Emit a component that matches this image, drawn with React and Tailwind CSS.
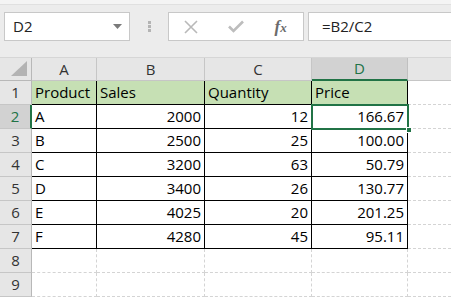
import React from 'react';

const font = { fontFamily: '"Open Sans", "Liberation Sans", sans-serif' };

const cols = ['A', 'B', 'C', 'D'];
const rows = [
  ['Product', 'Sales', 'Quantity', 'Price'],
  ['A', '2000', '12', '166.67'],
  ['B', '2500', '25', '100.00'],
  ['C', '3200', '63', '50.79'],
  ['D', '3400', '26', '130.77'],
  ['E', '4025', '20', '201.25'],
  ['F', '4280', '45', '95.11'],
];

function Toolbar() {
  return (
    <div className="h-[58px] bg-[#ececec] border-b border-[#d6d6d6]">
      <div className="h-[5px] bg-[#f4f4f4] border-b border-[#e0e0e0]" />
      <div className="flex items-center h-[45px] pt-[6px] pb-[8px]">
        <div className="ml-[4px] w-[126px] h-[29px] bg-white border border-[#c8c8c8] flex items-center justify-between pl-[8px] pr-[7px]">
          <span className="text-[15px] text-[#222]">D2</span>
          <svg width="9" height="5" viewBox="0 0 9 5">
            <path d="M0 0 L9 0 L4.5 5 Z" fill="#7a7a7a" />
          </svg>
        </div>
        <div className="w-[38px] flex flex-col items-center gap-[1px]">
          <div className="w-[3px] h-[3px] bg-[#b4b4b4]" />
          <div className="w-[3px] h-[3px] bg-[#b4b4b4]" />
          <div className="w-[3px] h-[3px] bg-[#b4b4b4]" />
        </div>
        <div className="w-[136px] h-[29px] bg-white border border-[#c8c8c8] flex items-center">
          <div className="w-[45px] flex justify-center">
            <svg width="14" height="14" viewBox="0 0 14 14">
              <path d="M1 1 L13 13 M13 1 L1 13" stroke="#b9b9b9" strokeWidth="1.6" fill="none" />
            </svg>
          </div>
          <div className="w-[45px] flex justify-center">
            <svg width="16" height="13" viewBox="0 0 16 13">
              <path d="M1 6.5 L5.5 11 L15 1.5" stroke="#bdbdbd" strokeWidth="2.6" fill="none" />
            </svg>
          </div>
          <div className="w-[45px] flex justify-center">
            <span
              className="italic font-bold text-[#6b6b6b] text-[17px] leading-none"
              style={{ fontFamily: '"Liberation Serif", "DejaVu Serif", serif' }}
            >
              f<span className="text-[13px]">x</span>
            </span>
          </div>
        </div>
        <div className="ml-[4px] flex-1 h-[29px] bg-white border border-[#c8c8c8] border-r-0 flex items-center pl-[13px]">
          <span className="text-[15px] text-[#222]">=B2/C2</span>
        </div>
      </div>
    </div>
  );
}

function Grid() {
  const template = 'grid-cols-[32px_65px_108px_107px_96px_1fr]';
  return (
    <div className="relative">
      <div className={`grid ${template} grid-rows-[23px_repeat(9,24px)]`}>
        <div className="bg-[#e6e6e6] border-r border-b border-[#b8b8b8] flex items-end justify-end pr-[4px] pb-[4px]">
          <svg width="16" height="15" viewBox="0 0 16 15">
            <path d="M16 0 L16 15 L0 15 Z" fill="#b3b3b3" />
          </svg>
        </div>
        {cols.map((c) => (
          <div
            key={c}
            className={
              c === 'D'
                ? 'bg-[#d2d2d2] border-r border-[#c0c0c0] border-b-2 border-b-[#217346] text-[#217346] flex items-center justify-center text-[15px]'
                : 'bg-[#e6e6e6] border-r border-b border-[#c6c6c6] text-[#333] flex items-center justify-center text-[15px]'
            }
          >
            {c}
          </div>
        ))}
        <div className="bg-[#e6e6e6] border-b border-[#c6c6c6]" />

        {Array.from({ length: 9 }).map((_, r) => {
          const n = r + 1;
          const data = rows[r];
          const sel = n === 2;
          return (
            <React.Fragment key={n}>
              <div
                className={
                  sel
                    ? 'bg-[#d2d2d2] border-r-2 border-r-[#217346] border-b border-b-[#c6c6c6] text-[#217346] flex items-center justify-center text-[15px]'
                    : 'bg-[#e6e6e6] border-r border-r-[#b8b8b8] border-b border-b-[#c6c6c6] text-[#333] flex items-center justify-center text-[15px]'
                }
              >
                {n}
              </div>
              {cols.map((c, ci) => {
                if (!data) {
                  return <div key={c} className="border-r border-b border-dashed border-[#d4d4d4]" />;
                }
                const header = n === 1;
                const right = !header && ci > 0;
                return (
                  <div
                    key={c}
                    className={`border-r border-b border-black flex items-center px-[3px] text-[15px] text-black ${
                      header ? 'bg-[#c6e0b4]' : 'bg-white'
                    } ${right ? 'justify-end' : 'justify-start'}`}
                  >
                    {data[ci]}
                  </div>
                );
              })}
              <div className="border-b border-dashed border-[#d4d4d4]" />
            </React.Fragment>
          );
        })}
      </div>
      <div className="absolute left-[311px] top-[46px] w-[98px] h-[26px] border-2 border-[#217346] pointer-events-none">
        <div className="absolute right-[-5px] bottom-[-5px] w-[6px] h-[6px] bg-[#217346] border border-white" />
      </div>
    </div>
  );
}

export default function App() {
  return (
    <div className="w-[451px] h-[297px] overflow-hidden bg-white" style={font}>
      <Toolbar />
      <Grid />
    </div>
  );
}
